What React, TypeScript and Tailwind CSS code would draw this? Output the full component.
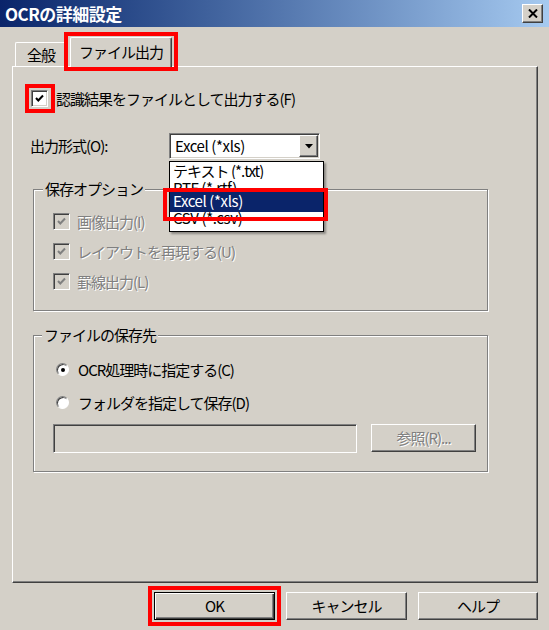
import React from "react";

const raised =
  "border border-t-white border-l-white border-r-[#404040] border-b-[#404040] shadow-[inset_-1px_-1px_0_#808080] bg-[#d4d0c8]";
const sunken =
  "border border-t-[#808080] border-l-[#808080] border-r-white border-b-white shadow-[inset_1px_1px_0_#404040,inset_-1px_-1px_0_#d4d0c8]";
const etched =
  "border border-[#808080] shadow-[inset_1px_1px_0_#fff,1px_1px_0_#fff]";
const disabledText = "text-[#808080] [text-shadow:1px_1px_0_#fff]";

function Check({ color = "#000" }: { color?: string }) {
  return (
    <svg width="11" height="11" viewBox="0 0 11 11">
      <path d="M2 5 L4.3 7.5 L9 2.5" stroke={color} strokeWidth="2" fill="none" />
    </svg>
  );
}

function CheckBox({ disabled }: { disabled?: boolean }) {
  return (
    <div
      className={`w-[17px] h-[17px] shrink-0 flex items-center justify-center ${sunken} ${
        disabled ? "bg-[#d4d0c8]" : "bg-white"
      }`}
    >
      <Check color={disabled ? "#808080" : "#000"} />
    </div>
  );
}

function Radio({ checked }: { checked?: boolean }) {
  return (
    <div className="w-[13px] h-[13px] shrink-0 rounded-full bg-white border border-t-[#808080] border-l-[#808080] border-r-white border-b-white shadow-[inset_1px_1px_0_#404040] flex items-center justify-center">
      {checked && <div className="w-[4px] h-[4px] rounded-full bg-black" />}
    </div>
  );
}

function RedBox({ className }: { className: string }) {
  return <span className={`absolute border-[4px] border-[#f00] pointer-events-none z-30 ${className}`} />;
}

export default function App() {
  return (
    <div className="w-[549px] h-[630px] bg-[#d4d0c8] overflow-hidden text-black text-[15px] leading-[18px] tracking-[-1px] font-['Noto_Sans_CJK_JP',sans-serif]">
      {/* title bar */}
      <div className="h-[27px] flex items-center justify-between pl-[5px] pr-[6px] bg-linear-to-r from-[#0a246a] to-[#a6caf0]">
        <span className="text-white font-bold text-[17px] tracking-[-0.5px]">OCRの詳細設定</span>
        <div className={`w-[21px] h-[19px] flex items-center justify-center ${raised}`}>
          <svg width="10" height="9" viewBox="0 0 10 9">
            <path d="M1 0.5 L9 8.5 M9 0.5 L1 8.5" stroke="#000" strokeWidth="2" />
          </svg>
        </div>
      </div>

      <div className="pl-[12px] pr-[11px] pt-[10px]">
        {/* tabs */}
        <div className="flex items-end h-[29px] pl-[3px]">
          <div className="w-[52px] h-[24px] border-t border-l border-t-white border-l-white border-r border-r-[#404040] shadow-[inset_-1px_0_0_#808080] rounded-t-[2px] flex items-center justify-center">
            全般
          </div>
          <div className="relative z-10 ml-[3px] -mb-[2px] w-[102px] h-[31px] bg-[#d4d0c8] border-t border-l border-t-white border-l-white border-r border-r-[#404040] shadow-[inset_-1px_0_0_#808080] rounded-t-[2px] flex items-center justify-center pb-[3px]">
            ファイル出力
            <RedBox className="-left-[7px] -right-[7px] -top-[6px] -bottom-[3px]" />
          </div>
        </div>

        {/* panel */}
        <div className="h-[517px] border border-t-white border-l-white border-r-[#404040] border-b-[#404040] shadow-[inset_-1px_-1px_0_#808080]">
          <div className="mt-[23px] pl-[18px] flex items-center h-[17px]">
            <div className="relative">
              <CheckBox />
              <RedBox className="-left-[6px] -right-[7px] -top-[6px] -bottom-[6px]" />
            </div>
            <span className="ml-[8px]">認識結果をファイルとして出力する(F)</span>
          </div>

          <div className="mt-[26px] pl-[17px] flex items-center">
            <span className="w-[139px] shrink-0">出力形式(O):</span>
            <div className="relative">
              <div className={`w-[151px] h-[26px] p-[1px] bg-white flex items-center justify-between ${sunken}`}>
                <span className="pl-[4px] tracking-[-0.4px]">Excel (*xls)</span>
                <div className={`w-[19px] h-[22px] flex items-center justify-center ${raised}`}>
                  <svg width="8" height="5" viewBox="0 0 8 5">
                    <polygon points="0,0 8,0 4,4.5" fill="#000" />
                  </svg>
                </div>
              </div>
              <div className="absolute left-0 top-[28px] w-[155px] h-[71px] bg-white border border-black shadow-[2px_2px_2px_rgba(0,0,0,0.35)] z-20 overflow-hidden tracking-[-0.4px]">
                <div className="h-[17px] pl-[3px] leading-[17px] overflow-hidden tracking-[-1px]">テキスト (*.txt)</div>
                <div className="h-[11px] pl-[3px] leading-[17px] overflow-hidden">RTF (*.rtf)</div>
                <div className="h-[22px] pl-[3px] leading-[22px] bg-[#0a246a] text-white">Excel (*xls)</div>
                <div className="h-[19px] pl-[3px] overflow-hidden">
                  <div className="-mt-[4px] leading-[20px]">CSV (*.csv)</div>
                </div>
              </div>
              <RedBox className="-left-[6px] top-[55px] w-[165px] h-[33px]" />
            </div>
          </div>

          {/* 保存オプション */}
          <div className={`relative mt-[30px] ml-[20px] w-[455px] h-[122px] ${etched}`}>
            <span className="absolute left-[9px] -top-[10px] px-[2px] bg-[#d4d0c8]">保存オプション</span>
            <div className="pt-[23px] pl-[19px] flex flex-col gap-[13px]">
              {["画像出力(I)", "レイアウトを再現する(U)", "罫線出力(L)"].map((t) => (
                <div key={t} className="flex items-center h-[17px]">
                  <CheckBox disabled />
                  <span className={`ml-[7px] ${disabledText}`}>{t}</span>
                </div>
              ))}
            </div>
          </div>

          {/* ファイルの保存先 */}
          <div className={`relative mt-[24px] ml-[20px] w-[455px] h-[137px] ${etched}`}>
            <span className="absolute left-[8px] -top-[10px] px-[2px] bg-[#d4d0c8]">ファイルの保存先</span>
            <div className="pt-[25px] pl-[22px] flex flex-col">
              <div className="flex items-center h-[17px]">
                <Radio checked />
                <span className="ml-[9px]">OCR処理時に指定する(C)</span>
              </div>
              <div className="flex items-center h-[17px] mt-[16px]">
                <Radio />
                <span className="ml-[9px]">フォルダを指定して保存(D)</span>
              </div>
            </div>
            <div className="mt-[13px] pl-[19px] flex items-start">
              <div className={`w-[304px] h-[29px] bg-[#d4d0c8] ${sunken}`} />
              <div className={`ml-[14px] w-[105px] h-[28px] flex items-center justify-center ${raised} ${disabledText}`}>
                参照(R)...
              </div>
            </div>
          </div>
        </div>

        {/* buttons */}
        <div className="mt-[9px] flex justify-end">
          <div className="relative">
            <div className="w-[121px] h-[28px] border border-black bg-[#d4d0c8] shadow-[inset_1px_1px_0_#fff,inset_-1px_-1px_0_#404040,inset_-2px_-2px_0_#808080] flex items-center justify-center">
              OK
            </div>
            <RedBox className="-left-[6px] -right-[6px] -top-[6px] -bottom-[6px]" />
          </div>
          <div className={`ml-[11px] w-[121px] h-[28px] flex items-center justify-center ${raised}`}>キャンセル</div>
          <div className={`ml-[11px] w-[120px] h-[28px] flex items-center justify-center ${raised}`}>ヘルプ</div>
        </div>
      </div>
    </div>
  );
}
